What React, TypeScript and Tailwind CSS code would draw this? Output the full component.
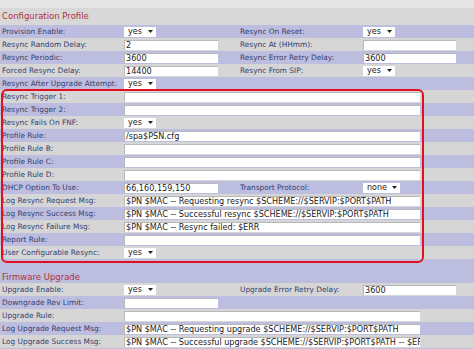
type Cell =
  | { kind: "select"; value: string; w?: number }
  | { kind: "input"; value?: string; size: "short" | "wide" | "right" };

type RowDef = {
  label: string;
  cell?: Cell;
  label2?: string;
  cell2?: Cell;
};

const config: RowDef[] = [
  { label: "Provision Enable:", cell: { kind: "select", value: "yes" }, label2: "Resync On Reset:", cell2: { kind: "select", value: "yes" } },
  { label: "Resync Random Delay:", cell: { kind: "input", value: "2", size: "short" }, label2: "Resync At (HHmm):", cell2: { kind: "input", size: "right" } },
  { label: "Resync Periodic:", cell: { kind: "input", value: "3600", size: "short" }, label2: "Resync Error Retry Delay:", cell2: { kind: "input", value: "3600", size: "right" } },
  { label: "Forced Resync Delay:", cell: { kind: "input", value: "14400", size: "short" }, label2: "Resync From SIP:", cell2: { kind: "select", value: "yes" } },
  { label: "Resync After Upgrade Attempt:", cell: { kind: "select", value: "yes" } },
  { label: "Resync Trigger 1:", cell: { kind: "input", size: "wide" } },
  { label: "Resync Trigger 2:", cell: { kind: "input", size: "wide" } },
  { label: "Resync Fails On FNF:", cell: { kind: "select", value: "yes" } },
  { label: "Profile Rule:", cell: { kind: "input", value: "/spa$PSN.cfg", size: "wide" } },
  { label: "Profile Rule B:", cell: { kind: "input", size: "wide" } },
  { label: "Profile Rule C:", cell: { kind: "input", size: "wide" } },
  { label: "Profile Rule D:", cell: { kind: "input", size: "wide" } },
  { label: "DHCP Option To Use:", cell: { kind: "input", value: "66,160,159,150", size: "short" }, label2: "Transport Protocol:", cell2: { kind: "select", value: "none", w: 37 } },
  { label: "Log Resync Request Msg:", cell: { kind: "input", value: "$PN $MAC -- Requesting resync $SCHEME://$SERVIP:$PORT$PATH", size: "wide" } },
  { label: "Log Resync Success Msg:", cell: { kind: "input", value: "$PN $MAC -- Successful resync $SCHEME://$SERVIP:$PORT$PATH", size: "wide" } },
  { label: "Log Resync Failure Msg:", cell: { kind: "input", value: "$PN $MAC -- Resync failed: $ERR", size: "wide" } },
  { label: "Report Rule:", cell: { kind: "input", size: "wide" } },
  { label: "User Configurable Resync:", cell: { kind: "select", value: "yes" } },
  { label: "" },
];

const firmware: RowDef[] = [
  { label: "Upgrade Enable:", cell: { kind: "select", value: "yes" }, label2: "Upgrade Error Retry Delay:", cell2: { kind: "input", value: "3600", size: "right" } },
  { label: "Downgrade Rev Limit:", cell: { kind: "input", size: "short" } },
  { label: "Upgrade Rule:", cell: { kind: "input", size: "wide" } },
  { label: "Log Upgrade Request Msg:", cell: { kind: "input", value: "$PN $MAC -- Requesting upgrade $SCHEME://$SERVIP:$PORT$PATH", size: "wide" } },
  { label: "Log Upgrade Success Msg:", cell: { kind: "input", value: "$PN $MAC -- Successful upgrade $SCHEME://$SERVIP:$PORT$PATH -- $ERR", size: "wide" } },
];

function Field({ cell }: { cell: Cell }) {
  if (cell.kind === "select") {
    return (
      <div
        className="flex h-[10px] items-center justify-between bg-white pl-[4px] pr-[3px] text-[8px] text-[#222]"
        style={{ width: cell.w ?? 32 }}
      >
        <span className="leading-[10px]">{cell.value}</span>
        <svg width="5" height="3" viewBox="0 0 5 3">
          <path d="M0 0H5L2.5 3Z" fill="#222" />
        </svg>
      </div>
    );
  }
  const width = cell.size === "wide" ? "w-[296px]" : cell.size === "right" ? "w-[93px]" : "w-[94px]";
  return (
    <div
      className={`${width} h-[10px] overflow-hidden whitespace-nowrap border-t border-l border-[#b8b8b8] bg-white pl-[1px] text-[8.1px] leading-[9px] text-[#222]`}
    >
      {cell.value}
    </div>
  );
}

function Row({ row, lavender }: { row: RowDef; lavender: boolean }) {
  return (
    <div className={`flex h-[13px] items-center ${lavender ? "bg-[#bdbddf]" : "bg-[#d6d6d6]"}`}>
      <div className="w-[124px] shrink-0 whitespace-nowrap pl-[2px] text-[#34406e]">{row.label}</div>
      <div className="w-[116px] shrink-0">
        {row.cell && row.cell.kind === "select" && <Field cell={row.cell} />}
        {row.cell && row.cell.kind === "input" && row.cell.size === "short" && <Field cell={row.cell} />}
      </div>
      {row.cell && row.cell.kind === "input" && row.cell.size === "wide" && (
        <div className="-ml-[116px]">
          <Field cell={row.cell} />
        </div>
      )}
      {row.label2 && (
        <>
          <div className="w-[123px] shrink-0 whitespace-nowrap text-[#34406e]">{row.label2}</div>
          <div>{row.cell2 && <Field cell={row.cell2} />}</div>
        </>
      )}
    </div>
  );
}

export default function App() {
  return (
    <div
      className="relative h-[349px] w-[474px] overflow-hidden bg-[#bdbddf] text-[7.4px]"
      style={{ fontFamily: '"DejaVu Sans", Verdana, sans-serif' }}
    >
      {/* top strip + section header */}
      <div className="h-[8px] bg-[#e6e6e6]" />
      <div className="flex h-[17px] items-center bg-[#d8d8d8] pl-[2px] text-[8.5px] text-[#b0303c]">
        Configuration Profile
      </div>

      {config.map((row, i) => (
        <Row key={i} row={row} lavender={i % 2 === 0} />
      ))}

      <div className="flex h-[11px] items-end bg-[#bdbddf] pl-[2px] text-[8.5px] leading-[11px] text-[#b0303c]">
        Firmware Upgrade
      </div>

      {firmware.map((row, i) => (
        <Row key={i} row={row} lavender={i % 2 === 1} />
      ))}

      {/* annotation box */}
      <div className="pointer-events-none absolute left-[1px] top-[89px] h-[174px] w-[423px] rounded-[6px] border-2 border-[#e0101e]" />
    </div>
  );
}
